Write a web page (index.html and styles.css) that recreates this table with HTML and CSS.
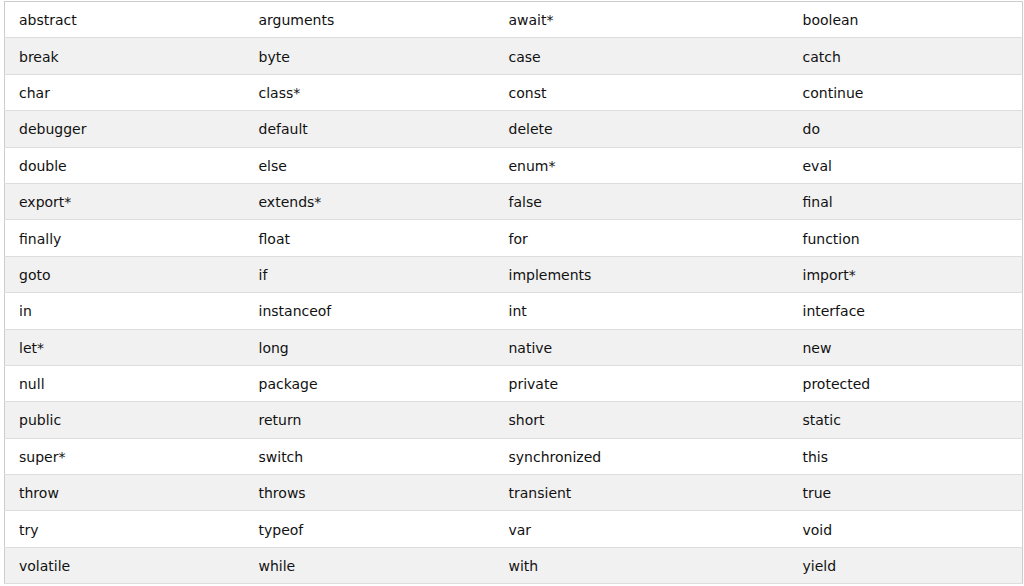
FILE: index.html
```html
<!DOCTYPE html>
<html>
<head>
<meta charset="utf-8">
<link rel="stylesheet" href="styles.css">
</head>
<body>
<table class="kw">
<colgroup><col class="c1"><col class="c2"><col class="c3"><col class="c4"></colgroup>
<tr><td>abstract</td><td>arguments</td><td>await*</td><td>boolean</td></tr>
<tr><td>break</td><td>byte</td><td>case</td><td>catch</td></tr>
<tr><td>char</td><td>class*</td><td>const</td><td>continue</td></tr>
<tr><td>debugger</td><td>default</td><td>delete</td><td>do</td></tr>
<tr><td>double</td><td>else</td><td>enum*</td><td>eval</td></tr>
<tr><td>export*</td><td>extends*</td><td>false</td><td>final</td></tr>
<tr><td>finally</td><td>float</td><td>for</td><td>function</td></tr>
<tr><td>goto</td><td>if</td><td>implements</td><td>import*</td></tr>
<tr><td>in</td><td>instanceof</td><td>int</td><td>interface</td></tr>
<tr><td>let*</td><td>long</td><td>native</td><td>new</td></tr>
<tr><td>null</td><td>package</td><td>private</td><td>protected</td></tr>
<tr><td>public</td><td>return</td><td>short</td><td>static</td></tr>
<tr><td>super*</td><td>switch</td><td>synchronized</td><td>this</td></tr>
<tr><td>throw</td><td>throws</td><td>transient</td><td>true</td></tr>
<tr><td>try</td><td>typeof</td><td>var</td><td>void</td></tr>
<tr><td>volatile</td><td>while</td><td>with</td><td>yield</td></tr>
</table>
</body>
</html>
```
FILE: styles.css
```css
html, body { margin: 0; padding: 0; background: #fff; }
body { padding: 1px 0 0 4px; }
.kw {
  border-collapse: collapse;
  table-layout: fixed;
  width: 1018px;
  border: 1px solid #ccc;
  font-family: "DejaVu Sans", Verdana, sans-serif;
  font-size: 14px;
  color: #111;
}
.c1 { width: 240px; }
.c2 { width: 250px; }
.c3 { width: 294px; }
.c4 { width: 234px; }
.kw td {
  height: 36.4px;
  padding: 1px 0 0 14px;
  border-bottom: 1px solid #ddd;
  vertical-align: middle;
  box-sizing: border-box;
}
.kw tr:nth-child(even) { background: #f1f1f1; }
```
